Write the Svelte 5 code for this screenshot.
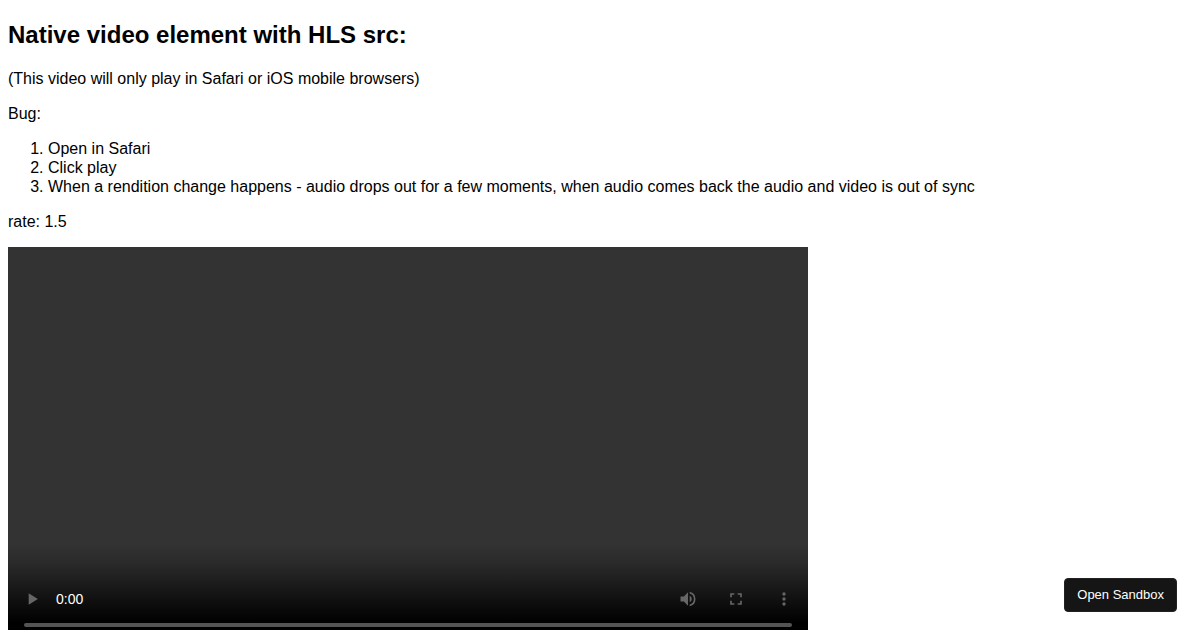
<script>
  const steps = [
    'Open in Safari',
    'Click play',
    'When a rendition change happens - audio drops out for a few moments, when audio comes back the audio and video is out of sync'
  ];

  let rate = 1.5;
  let position = 0;
</script>

<svelte:head>
  <title>HLS playback rate</title>
</svelte:head>

<main class="page">
  <h2>Native video element with HLS src:</h2>
  <p>(This video will only play in Safari or iOS mobile browsers)</p>
  <p>Bug:</p>
  <ol>
    {#each steps as step}
      <li>{step}</li>
    {/each}
  </ol>
  <p>rate: {rate}</p>

  <section class="player" aria-label="Video player">
    <div class="controls">
      <div class="buttons">
        <button class="icon-button" aria-label="Play">
          <svg viewBox="0 0 24 24"><path d="M8 5v14l11-7z" /></svg>
        </button>
        <span class="time">0:00</span>
        <button class="icon-button" aria-label="Mute">
          <svg viewBox="0 0 24 24"><path d="M3 9v6h4l5 5V4L7 9H3zm13.5 3A4.5 4.5 0 0 0 14 7.97v8.05A4.48 4.48 0 0 0 16.5 12zM14 3.23v2.06a7 7 0 0 1 0 13.42v2.06a9 9 0 0 0 0-17.54z" /></svg>
        </button>
        <button class="icon-button" aria-label="Full screen">
          <svg viewBox="0 0 24 24"><path d="M7 14H5v5h5v-2H7v-3zm-2-4h2V7h3V5H5v5zm12 7h-3v2h5v-5h-2v3zM14 5v2h3v3h2V5h-5z" /></svg>
        </button>
        <button class="icon-button" aria-label="More options">
          <svg viewBox="0 0 24 24"><path d="M12 8a2 2 0 1 0 0-4 2 2 0 0 0 0 4zm0 2a2 2 0 1 0 0 4 2 2 0 0 0 0-4zm0 6a2 2 0 1 0 0 4 2 2 0 0 0 0-4z" /></svg>
        </button>
      </div>
      <input class="timeline" type="range" min="0" max="100" bind:value={position} aria-label="Video position" />
    </div>
  </section>
</main>

<button class="sandbox-button">Open Sandbox</button>

<style>
  :global(body) {
    background: #fff;
    overflow: hidden;
  }

  .page {
    padding: 20px 8px 0;
    color: #000;
    font-family: Helvetica, "Liberation Sans", Arial, sans-serif;
    font-size: 16px;
  }

  h2 {
    margin: 0 0 20px;
    font-size: 24px;
    line-height: 29px;
  }

  p,
  ol {
    margin: 16px 0;
    line-height: 19px;
  }

  ol {
    padding-left: 40px;
  }

  .player {
    display: flex;
    flex-direction: column;
    justify-content: flex-end;
    max-width: 800px;
    aspect-ratio: 2 / 1;
    background: #333;
  }

  .controls {
    padding: 40px 0 20px;
    background: linear-gradient(to top, #000 24px, #2a2a2a 84px, #333 104px);
  }

  .buttons {
    display: flex;
    align-items: center;
    height: 48px;
  }

  .icon-button {
    display: flex;
    align-items: center;
    justify-content: center;
    width: 48px;
    height: 48px;
    padding: 0;
    border: 0;
    background: none;
  }

  .icon-button svg {
    width: 20px;
    height: 20px;
    fill: #666;
  }

  .time {
    flex: 1;
    color: #fff;
    font-size: 14px;
  }

  .timeline {
    display: block;
    width: calc(100% - 32px);
    height: 4px;
    margin: 0 16px;
    border-radius: 2px;
    background: #545454;
    appearance: none;
  }

  .timeline::-webkit-slider-thumb {
    width: 0;
    height: 0;
    appearance: none;
  }

  .sandbox-button {
    position: fixed;
    right: 23px;
    bottom: 18px;
    height: 34px;
    padding: 0 12px 2px;
    border: 1px solid #222;
    border-radius: 4px;
    background: #151515;
    color: #fff;
    font-family: Helvetica, "Liberation Sans", Arial, sans-serif;
    font-size: 13px;
  }
</style>
